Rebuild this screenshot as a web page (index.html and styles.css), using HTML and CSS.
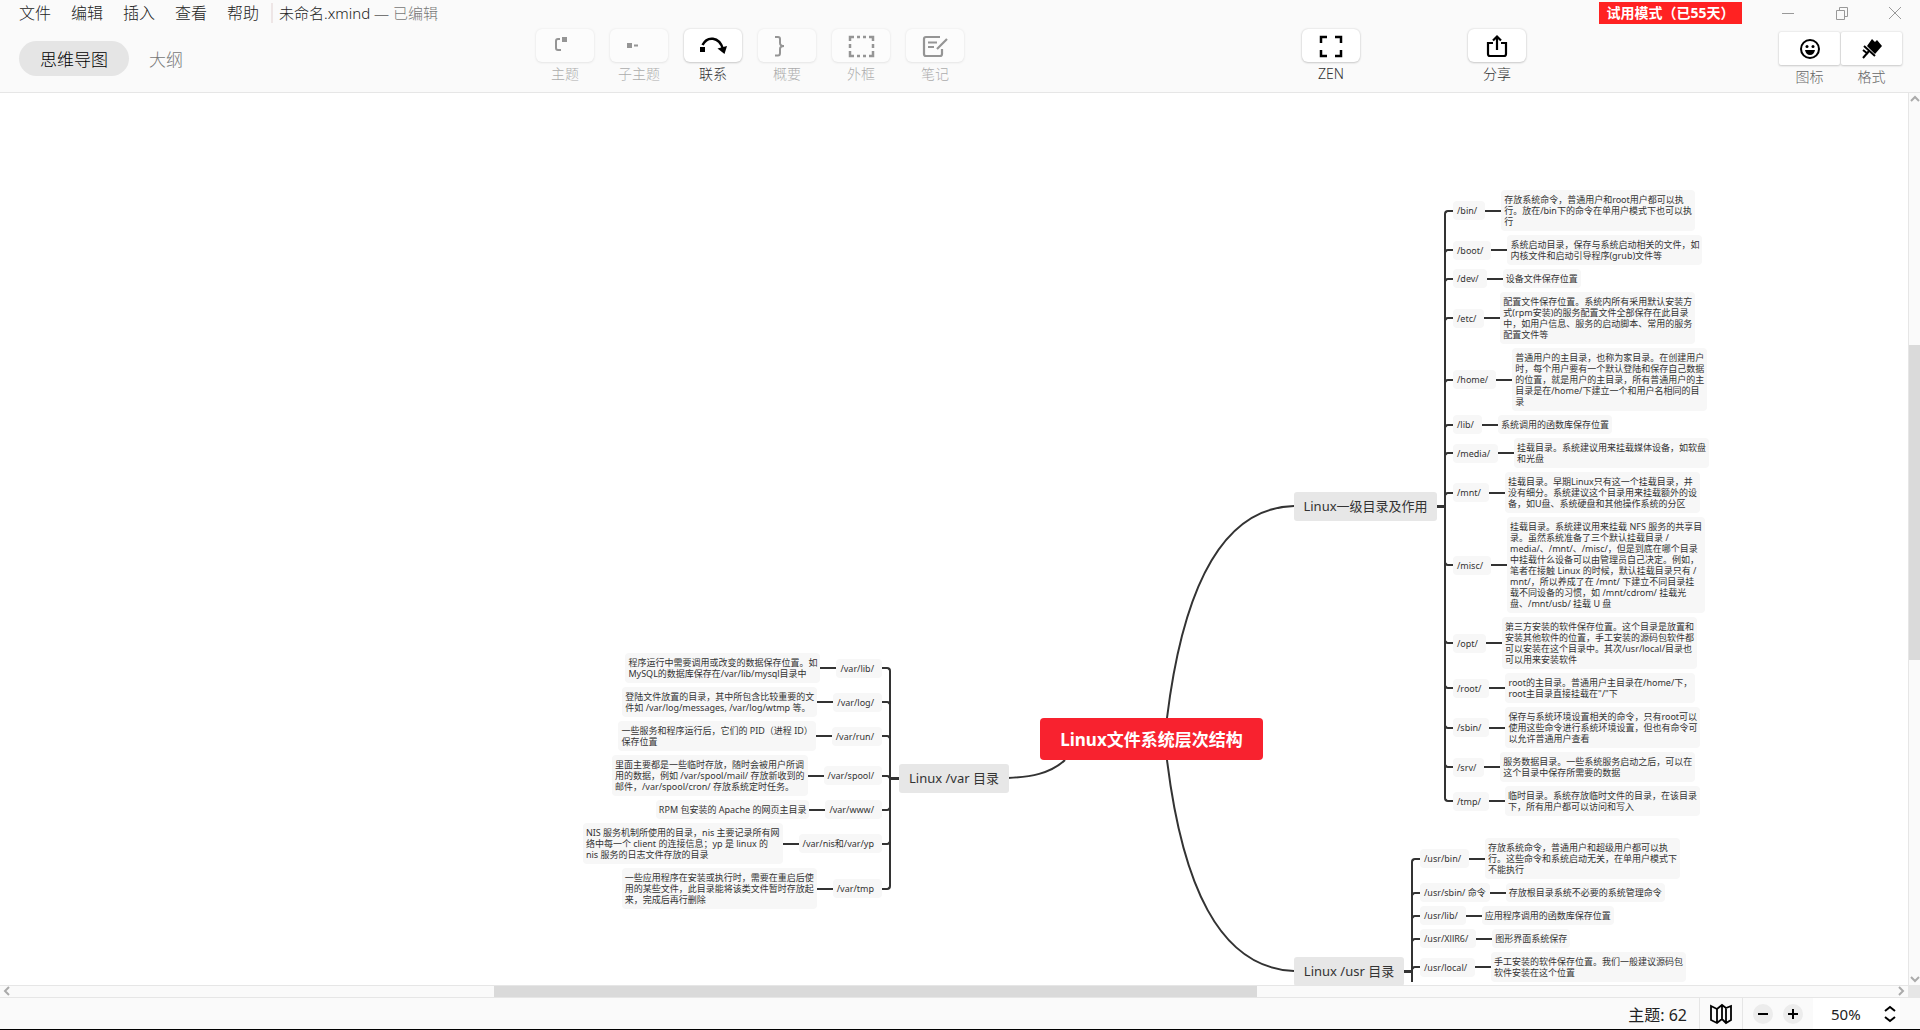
FILE: index.html
```html
<!DOCTYPE html>
<html lang="zh-Hans">
<head>
    <meta charset="UTF-8">
    <meta name="viewport" content="width=device-width, initial-scale=1.0">
    <title>未命名.xmind</title>
    <link rel="stylesheet" href="styles.css">
</head>
<body>
    <header class="header">
        <div class="header-left">
            <nav class="menu">
                <button>文件</button>
                <button>编辑</button>
                <button>插入</button>
                <button>查看</button>
                <button>帮助</button>
                <h1 class="file-name">未命名.xmind <span>— 已编辑</span></h1>
            </nav>
            <div class="views">
                <button class="view active">思维导图</button>
                <button class="view">大纲</button>
            </div>
        </div>

        <div class="tools">
            <button class="tool" disabled>
                <span class="tool-box"><svg width="24" height="24" viewBox="0 0 24 24"><path d="M7 5H5Q3 5 3 7V14Q3 16 5 16H8" fill="none" stroke="#000" stroke-width="2"/><path d="M9 3h5v5H9z"/></svg></span>
                主题
            </button>
            <button class="tool" disabled>
                <span class="tool-box"><svg width="24" height="24" viewBox="0 0 24 24"><path d="M0 9h5v5H0zM7 10.500h4v2H7z"/></svg></span>
                子主题
            </button>
            <button class="tool">
                <span class="tool-box"><svg width="28" height="24" viewBox="0 0 28 24"><path d="M1 13h5v5H1z"/><path d="M3.500 11C8 2 20 2 24 15" fill="none" stroke="#000" stroke-width="2.500"/><path d="M18.500 14.500l9.500-2.500-2.500 8z"/></svg></span>
                联系
            </button>
            <button class="tool" disabled>
                <span class="tool-box"><svg width="24" height="24" viewBox="0 0 24 24"><path d="M0 3H3Q5 3 5 5V9Q5 12 9 12Q5 12 5 15V19Q5 21.500 3 21.500H0" fill="none" stroke="#000" stroke-width="2"/></svg></span>
                概要
            </button>
            <button class="tool" disabled>
                <span class="tool-box"><svg width="28" height="24" viewBox="0 0 28 24"><path d="M3 7V3H7M10 3h3M16 3h3M22 3h4v4M26 10v4M26 17v5h-4M19 22h-3M13 22h-3M7 22H3v-5M3 14v-4" fill="none" stroke="#000" stroke-width="2.500"/></svg></span>
                外框
            </button>
            <button class="tool" disabled>
                <span class="tool-box"><svg width="26" height="24" viewBox="0 0 26 24"><path d="M18 3H4Q2 3 2 5V20Q2 22 4 22H18Q20 22 20 20V15M6 8.500h9M6 13h6M15 15L25 5" fill="none" stroke="#000" stroke-width="2.200"/></svg></span>
                笔记
            </button>
        </div>

        <div class="actions">
            <button class="tool">
                <span class="tool-box"><svg width="24" height="24" viewBox="0 0 24 24"><path d="M2 9V3H8M16 3h6v6M22 16v6h-6M8 22H2v-6" fill="none" stroke="#000" stroke-width="2.500"/></svg></span>
                ZEN
            </button>
            <button class="tool">
                <span class="tool-box"><svg width="24" height="24" viewBox="0 0 24 24"><path d="M8 9H3V20Q3 22 5 22H19Q21 22 21 20V9H16M12 16V3M8 6.500L12 2.500 16 6.500" fill="none" stroke="#000" stroke-width="2.200"/></svg></span>
                分享
            </button>
        </div>

        <div class="header-right">
            <div class="window-bar">
                <strong class="trial">试用模式（已55天）</strong>
                <button class="win" aria-label="最小化"><svg width="14" height="14" viewBox="0 0 14 14"><path d="M1 7.500h12"/></svg></button>
                <button class="win" aria-label="还原"><svg width="14" height="14" viewBox="0 0 14 14"><path d="M1.500 4.500h8v9h-8zM4.500 4.500v-3h8v9h-3"/></svg></button>
                <button class="win" aria-label="关闭"><svg width="14" height="14" viewBox="0 0 14 14"><path d="M1 1l12 12M13 1L1 13"/></svg></button>
            </div>
            <div class="panels">
                <button class="tool">
                    <span class="tool-box"><svg width="24" height="24" viewBox="0 0 24 24"><circle cx="12" cy="12" r="9" fill="none" stroke="#000" stroke-width="2"/><circle cx="9" cy="9.500" r="1.500"/><circle cx="15" cy="9.500" r="1.500"/><path d="M7 13h10Q16 18 12 18T7 13z"/></svg></span>
                    图标
                </button>
                <button class="tool">
                    <span class="tool-box"><svg width="24" height="24" viewBox="0 0 24 24"><path d="M12 2l3 3 2-2 5 6-7 8-8-8z"/><path d="M4 9l11 10M9 14l-6 7M3 13l5 4" fill="none" stroke="#000" stroke-width="2"/></svg></span>
                    格式
                </button>
            </div>
        </div>
    </header>

    <main class="workspace">
        <div class="canvas">
            <svg class="links" width="1908" height="892" viewBox="0 93 1908 892">
                <path d="M1167 718C1182 596 1218 508 1294 506"/>
                <path d="M1167 760C1182 882 1218 968 1294 971"/>
                <path d="M1065 760C1050 774 1030 777 1008 778"/>
            </svg>

            <div class="topic root">Linux文件系统层次结构</div>
            <div class="topic main level-one">Linux一级目录及作用</div>
            <div class="topic main var">Linux /var 目录</div>
            <div class="topic main usr">Linux /usr 目录</div>

            <ul class="branch branch-level-one">
                <li class="down"><span>/bin/</span><i></i><p>存放系统命令，普通用户和root用户都可以执<br>行。放在/bin下的命令在单用户模式下也可以执<br>行</p></li>
                <li class="down"><span>/boot/</span><i></i><p>系统启动目录，保存与系统启动相关的文件，如<br>内核文件和启动引导程序(grub)文件等</p></li>
                <li class="down"><span>/dev/</span><i></i><p>设备文件保存位置</p></li>
                <li class="down"><span>/etc/</span><i></i><p>配置文件保存位置。系统内所有采用默认安装方<br>式(rpm安装)的服务配置文件全部保存在此目录<br>中，如用户信息、服务的启动脚本、常用的服务<br>配置文件等</p></li>
                <li class="down"><span>/home/</span><i></i><p>普通用户的主目录，也称为家目录。在创建用户<br>时，每个用户要有一个默认登陆和保存自己数据<br>的位置，就是用户的主目录，所有普通用户的主<br>目录是在/home/下建立一个和用户名相同的目<br>录</p></li>
                <li class="down"><span>/lib/</span><i></i><p>系统调用的函数库保存位置</p></li>
                <li class="down"><span>/media/</span><i></i><p>挂载目录。系统建议用来挂载媒体设备，如软盘<br>和光盘</p></li>
                <li class="down"><span>/mnt/</span><i></i><p>挂载目录。早期Linux只有这一个挂载目录，并<br>没有细分。系统建议这个目录用来挂载额外的设<br>备，如U盘、系统硬盘和其他操作系统的分区</p></li>
                <li><span>/misc/</span><i></i><p>挂载目录。系统建议用来挂载 NFS 服务的共享目<br>录。虽然系统准备了三个默认挂载目录 /<br>media/、/mnt/、/misc/，但是到底在哪个目录<br>中挂载什么设备可以由管理员自己决定。例如，<br>笔者在接触 Linux 的时候，默认挂载目录只有 /<br>mnt/，所以养成了在 /mnt/ 下建立不同目录挂<br>载不同设备的习惯，如 /mnt/cdrom/ 挂载光<br>盘、/mnt/usb/ 挂载 U 盘</p></li>
                <li><span>/opt/</span><i></i><p>第三方安装的软件保存位置。这个目录是放置和<br>安装其他软件的位置，手工安装的源码包软件都<br>可以安装在这个目录中。其次/usr/local/目录也<br>可以用来安装软件</p></li>
                <li><span>/root/</span><i></i><p>root的主目录。普通用户主目录在/home/下，<br>root主目录直接挂载在"/"下</p></li>
                <li><span>/sbin/</span><i></i><p>保存与系统环境设置相关的命令，只有root可以<br>使用这些命令进行系统环境设置，但也有命令可<br>以允许普通用户查看</p></li>
                <li><span>/srv/</span><i></i><p>服务数据目录。一些系统服务启动之后，可以在<br>这个目录中保存所需要的数据</p></li>
                <li><span>/tmp/</span><i></i><p>临时目录。系统存放临时文件的目录，在该目录<br>下，所有用户都可以访问和写入</p></li>
            </ul>

            <ul class="branch branch-usr">
                <li class="down"><span>/usr/bin/</span><i></i><p>存放系统命令，普通用户和超级用户都可以执<br>行。这些命令和系统启动无关，在单用户模式下<br>不能执行</p></li>
                <li class="down"><span class="tight">/usr/sbin/ 命令</span><i></i><p>存放根目录系统不必要的系统管理命令</p></li>
                <li class="down"><span>/usr/lib/</span><i></i><p>应用程序调用的函数库保存位置</p></li>
                <li class="down"><span>/usr/XllR6/</span><i></i><p>图形界面系统保存</p></li>
                <li class="down"><span>/usr/local/</span><i></i><p>手工安装的软件保存位置。我们一般建议源码包<br>软件安装在这个位置</p></li>
            </ul>

            <ul class="branch branch-var">
                <li class="down"><span>/var/lib/</span><i></i><p>程序运行中需要调用或改变的数据保存位置。如<br>MySQL的数据库保存在/var/lib/mysql目录中</p></li>
                <li class="down"><span>/var/log/</span><i></i><p>登陆文件放置的目录，其中所包含比较重要的文<br>件如 /var/log/messages, /var/log/wtmp 等。</p></li>
                <li class="down"><span>/var/run/</span><i></i><p>一些服务和程序运行后，它们的 PID（进程 ID）<br>保存位置</p></li>
                <li class="down"><span>/var/spool/</span><i></i><p>里面主要都是一些临时存放，随时会被用户所调<br>用的数据，例如 /var/spool/mail/ 存放新收到的<br>邮件，/var/spool/cron/ 存放系统定时任务。</p></li>
                <li><span>/var/www/</span><i></i><p>RPM 包安装的 Apache 的网页主目录</p></li>
                <li><span>/var/nis和/var/yp</span><i></i><p>NIS 服务机制所使用的目录，nis 主要记录所有网<br>络中每一个 client 的连接信息；yp 是 linux 的<br>nis 服务的日志文件存放的目录</p></li>
                <li><span>/var/tmp</span><i></i><p>一些应用程序在安装或执行时，需要在重启后使<br>用的某些文件，此目录能将该类文件暂时存放起<br>来，完成后再行删除</p></li>
            </ul>
        </div>

        <div class="scroll-y">
            <svg width="11" height="12" viewBox="0 0 11 12"><path d="M2 8l4-4 4 4"/></svg>
            <div class="thumb"></div>
            <svg width="11" height="12" viewBox="0 0 11 12"><path d="M2 4l4 4 4-4"/></svg>
        </div>
        <div class="scroll-x">
            <svg width="14" height="11" viewBox="0 0 14 11"><path d="M9 1L5 5l4 4"/></svg>
            <div class="thumb"></div>
            <svg width="14" height="11" viewBox="0 0 14 11"><path d="M5 1l4 4-4 4"/></svg>
        </div>
        <div class="scroll-corner"></div>
    </main>

    <footer class="status">
        <span class="count">主题: 62</span>
        <button class="map-button" aria-label="导航图"><svg width="24" height="24" viewBox="0 0 24 24"><path d="M2 4L8 7 13 3 17 6 22 4V18L17 21 13 17 8 21 2 18zM8 7v14M13 3v14M17 6v15" fill="none" stroke="#000" stroke-width="1.800"/></svg></button>
        <div class="zoom-buttons">
            <button aria-label="缩小"><svg width="20" height="20" viewBox="0 0 20 20"><path d="M5 10h10" stroke="#000" stroke-width="2"/></svg></button>
            <button aria-label="放大"><svg width="20" height="20" viewBox="0 0 20 20"><path d="M5 10h10M10 5v10" stroke="#000" stroke-width="2"/></svg></button>
        </div>
        <button class="zoom-level">50%<svg width="12" height="18" viewBox="0 0 12 18"><path d="M1 6l5-4 5 4M1 12l5 4 5-4" fill="none" stroke="#000" stroke-width="2"/></svg></button>
    </footer>
</body>
</html>
```
FILE: styles.css
```css
*,
*::before,
*::after {
    box-sizing: border-box;
}

body {
    margin: 0;
    height: 100vh;
    display: flex;
    flex-direction: column;
    overflow: hidden;
    background: #fafafa;
    color: #222;
    font-family: "Noto Sans", "Noto Sans CJK SC", sans-serif;
}

button {
    margin: 0;
    padding: 0;
    border: none;
    background: none;
    color: inherit;
    font-family: inherit;
    font-weight: inherit;
    cursor: pointer;
}

svg {
    display: block;
}

/* header */
.header {
    height: 93px;
    flex: none;
    display: grid;
    grid-template-columns: 536px 1fr auto 254px;
    border-bottom: 1px solid #e6e6e6;
    font-weight: 300;
}

.menu {
    display: flex;
    align-items: center;
    height: 26px;
    padding-left: 19px;
    gap: 20px;
}

.menu button {
    font-size: 16px;
    line-height: 24px;
}

.file-name {
    margin: 0 0 0 -8px;
    padding-left: 6px;
    border-left: 2px solid #eee6e6;
    font-size: 15px;
    line-height: 20px;
    font-weight: inherit;
    white-space: nowrap;
}

.file-name span {
    color: #777;
}

.views {
    display: flex;
    gap: 20px;
    margin: 15px 0 0 19px;
}

.view {
    height: 35px;
    font-size: 17px;
    color: #777;
}

.view.active {
    width: 110px;
    border-radius: 18px;
    background: #e5e5e5;
    color: #000;
}

.tools {
    display: flex;
    gap: 16px;
    padding-top: 29px;
}

.actions {
    display: flex;
    gap: 108px;
    padding: 29px 140px 0 0;
}

.tool {
    width: 58px;
    height: 56px;
    font-size: 14px;
    line-height: 24px;
    color: #333;
    white-space: nowrap;
}

.tool:disabled {
    opacity: 0.4;
}

.tool-box {
    display: flex;
    align-items: center;
    justify-content: center;
    height: 33px;
    border-radius: 6px;
    background: #fff;
    box-shadow: 0 0 2px #ccc, 0 1px 2px #ccc;
}

.window-bar {
    display: flex;
    align-items: center;
    height: 26px;
    margin-left: -67px;
    padding-right: 18px;
    justify-content: space-between;
}

.trial {
    width: 143px;
    height: 22px;
    background: #f22;
    color: #fff;
    font-size: 14px;
    font-weight: bold;
    line-height: 22px;
    text-align: center;
    white-space: nowrap;
}

.win path {
    fill: none;
    stroke: #999;
}

.panels {
    display: flex;
    justify-content: flex-end;
    gap: 1px;
    margin: 6px 18px 0 0;
}

.panels .tool {
    width: 61px;
    color: #666;
}

.panels .tool-box {
    border-radius: 2px;
}

/* mind map */
.workspace {
    flex: 1;
    min-height: 0;
    display: grid;
    grid-template-columns: 1fr 12px;
    grid-template-rows: 1fr 12px;
}

.canvas {
    position: relative;
    overflow: hidden;
    background: #fff;
}

.links {
    position: absolute;
    left: 0;
    top: 0;
    fill: none;
    stroke: #333;
    stroke-width: 2;
}

.topic {
    position: absolute;
    display: flex;
    align-items: center;
    justify-content: center;
    padding-bottom: 2px;
    white-space: nowrap;
}

.root {
    left: 1040px;
    top: 625px;
    width: 223px;
    height: 42px;
    border-radius: 4px;
    background: #f8222f;
    color: #fff;
    font-size: 17px;
    font-weight: bold;
}

.main {
    height: 29px;
    border-radius: 3px;
    background: #e7e7e7;
    color: #333;
    font-size: 13px;
}

.level-one {
    left: 1294px;
    top: 399px;
    width: 143px;
}

.var {
    left: 899px;
    top: 671px;
    width: 110px;
}

.usr {
    left: 1294px;
    top: 864px;
    width: 110px;
}

/* stub between a main topic and its trunk */
.main::after {
    content: "";
    position: absolute;
    left: 100%;
    top: 13px;
    width: 9px;
    height: 3px;
    background: #333;
}

.var::after {
    left: auto;
    right: 100%;
}

.branch {
    position: absolute;
    margin: 0;
    padding: 0;
    list-style: none;
    display: flex;
    flex-direction: column;
    gap: 4px;
    color: #333;
    font-size: 9px;
    line-height: 11px;
    white-space: nowrap;
}

.branch-level-one {
    left: 1453px;
    top: 97px;
}

.branch-usr {
    left: 1420px;
    top: 745px;
}

.branch-var {
    right: 1026px;
    top: 560px;
}

.branch li {
    position: relative;
    display: flex;
    align-items: center;
}

.branch span {
    padding: 4px 8px 4px 4px;
    border-radius: 4px;
    background: #f7f7f7;
}

.branch .tight {
    padding-right: 4px;
}

.branch i {
    width: 16px;
    height: 2px;
    background: #333;
}

.branch p {
    margin: 0;
    padding: 4px 3px;
    border-radius: 4px;
    background: #f7f7f7;
}

.branch-var li {
    flex-direction: row-reverse;
}

/* hooks that join each topic to the trunk */
.branch li::before {
    content: "";
    position: absolute;
    right: 100%;
    bottom: calc(50% - 1px);
    width: 9px;
    height: 6px;
    border: solid #333;
    border-width: 0 0 2px 2px;
    border-radius: 0 0 0 4px;
}

.branch li.down::before {
    top: calc(50% - 1px);
    bottom: auto;
    border-width: 2px 0 0 2px;
    border-radius: 4px 0 0 0;
}

.branch-var li::before {
    right: auto;
    left: 100%;
    border-width: 0 2px 2px 0;
    border-radius: 0 0 4px 0;
}

.branch-var li.down::before {
    border-width: 2px 2px 0 0;
    border-radius: 0 4px 0 0;
}

/* trunk */
.branch::before {
    content: "";
    position: absolute;
    left: -9px;
    top: 24px;
    bottom: 18px;
    width: 2px;
    background: #333;
}

.branch-usr::before {
    bottom: 0;
}

.branch-var::before {
    left: auto;
    right: -9px;
    top: 18px;
    bottom: 24px;
}

/* scrollbars */
.scroll-x,
.scroll-y {
    display: flex;
    justify-content: space-between;
    background: #fafafa;
}

.scroll-y {
    position: relative;
    flex-direction: column;
    border-left: 1px solid #e6e6e6;
}

.scroll-x {
    position: relative;
    border-top: 1px solid #e6e6e6;
}

.scroll-x path,
.scroll-y path {
    fill: none;
    stroke: #aaa;
    stroke-width: 2;
}

.thumb {
    position: absolute;
    background: #dadada;
}

.scroll-y .thumb {
    top: 28.3%;
    width: 100%;
    height: 35.3%;
}

.scroll-x .thumb {
    left: 25.9%;
    width: 40%;
    height: 100%;
}

.scroll-corner {
    background: #e6e6e6;
}

/* status bar */
.status {
    height: 33px;
    flex: none;
    display: flex;
    justify-content: flex-end;
    padding-right: 20px;
    border-top: 1px solid #e6e6e6;
    border-bottom: 1px solid #000;
}

.count {
    padding-right: 12px;
    font-size: 16px;
    line-height: 34px;
}

.map-button {
    width: 44px;
    padding-left: 9px;
    border: solid #e6e6e6;
    border-width: 0 1px;
}

.zoom-buttons {
    display: flex;
    align-items: center;
    gap: 10px;
    padding: 0 10px;
}

.zoom-buttons button {
    border-radius: 50%;
    background: #ececec;
}

.zoom-level {
    display: flex;
    align-items: center;
    justify-content: space-between;
    width: 87px;
    padding: 0 4px 0 18px;
    background: #fff;
    font-size: 15px;
}
```
